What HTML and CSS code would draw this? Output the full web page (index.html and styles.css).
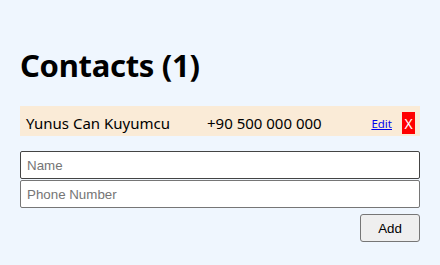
FILE: index.html
```html
<!DOCTYPE html>
<html lang="en">
<head>
  <meta charset="UTF-8" />
  <title>Contacts</title>
  <link rel="stylesheet" href="styles.css">
</head>
<body>
  <div class="app">
    <h1 class="title">Contacts (1)</h1>

    <ul class="contact-list">
      <li class="contact">
        <span class="contact-name">Yunus Can Kuyumcu</span>
        <span class="contact-phone">+90 500 000 000</span>
        <a href="#" class="contact-edit">Edit</a>
        <button class="contact-delete">X</button>
      </li>
    </ul>

    <form class="contact-form">
      <input type="text" class="field" placeholder="Name">
      <input type="text" class="field" placeholder="Phone Number">
      <div class="form-actions">
        <button type="button" class="btn-add">Add</button>
      </div>
    </form>
  </div>
</body>
</html>
```

FILE: styles.css
```css
body {
  margin: 0;
  background: #eff6fe;
  font-family: 'Noto Sans', 'Open Sans', sans-serif;
}

.app {
  padding: 20px;
}

.title {
  font-size: 31px;
  font-weight: bold;
  margin: 24px 0 19px;
  line-height: 43px;
  letter-spacing: -0.3px;
}

.contact-list {
  list-style: none;
  margin: 0 0 15px;
  padding: 0;
}

.contact {
  display: flex;
  align-items: center;
  background: antiquewhite;
  padding: 6px 5px 2px 6px;
  height: 22px;
  font-size: 15px;
}

.contact-name {
  width: 181px;
}

.contact-phone {
  flex: 1;
}

.contact-edit {
  color: #0000ee;
  font-size: 11.5px;
  margin-right: 10px;
}

.contact-delete {
  background: red;
  color: #fff;
  border: none;
  width: 13px;
  height: 22px;
  padding: 0;
  font-family: 'Noto Sans', sans-serif;
  font-size: 14px;
}

.contact-form {
  display: flex;
  flex-direction: column;
}

.field {
  height: 28px;
  box-sizing: border-box;
  margin: 0 0 1px;
  padding: 0 6px;
  border: 1px solid #767676;
  border-radius: 2px;
  font-family: 'Liberation Sans', Arial, sans-serif;
  font-size: 13.33px;
}

.field:first-child {
  border-color: #444;
}

.field::placeholder {
  color: #757575;
}

.form-actions {
  display: flex;
  justify-content: flex-end;
  margin-top: 5px;
}

.btn-add {
  width: 60px;
  height: 28px;
  background: #efefef;
  border: 1px solid #767676;
  border-radius: 3px;
  font-family: 'Liberation Sans', Arial, sans-serif;
  font-size: 13.33px;
}
```
